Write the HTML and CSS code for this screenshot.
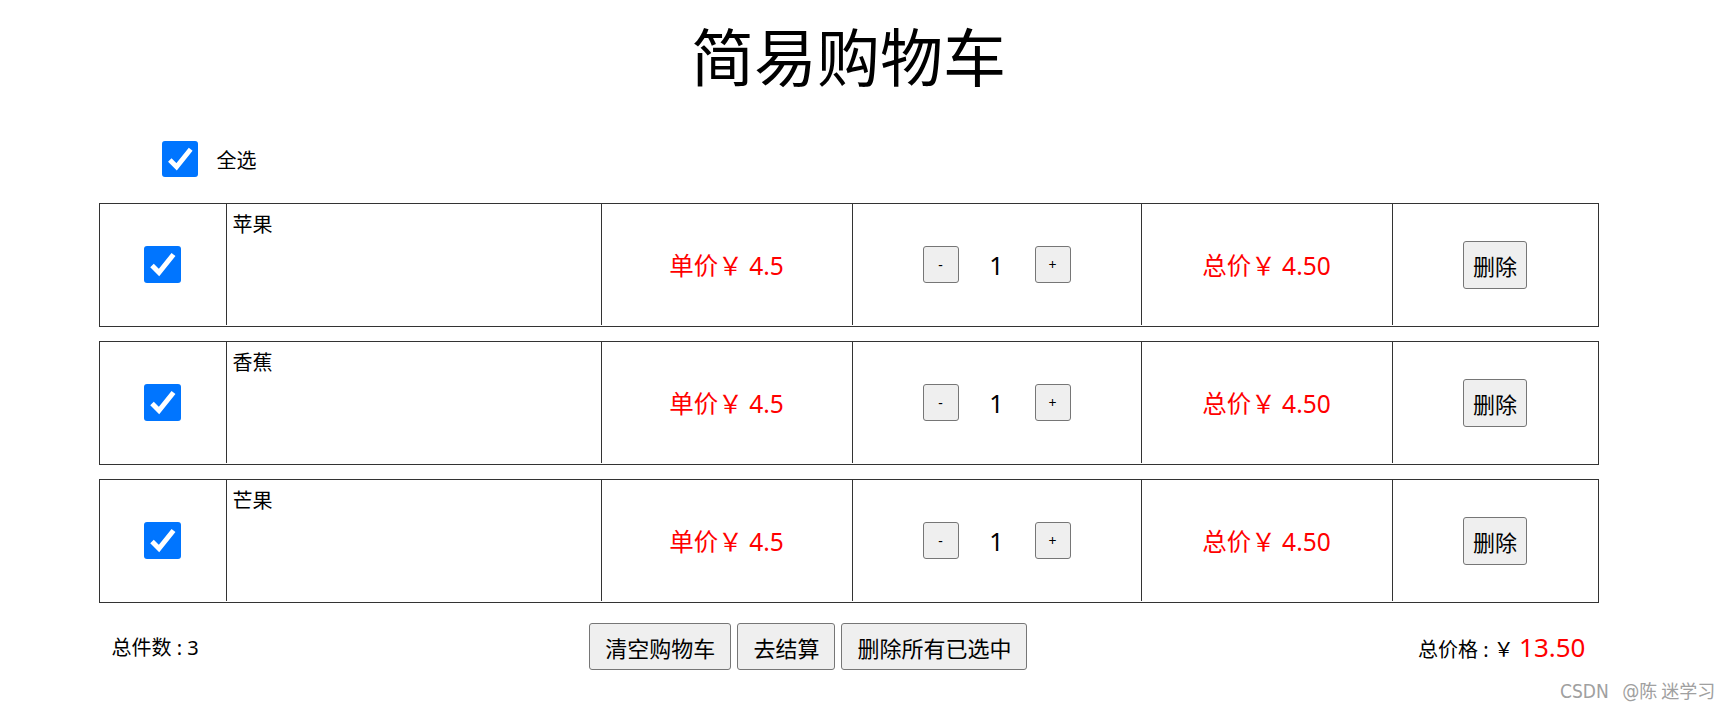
FILE: index.html
```html
<!DOCTYPE html>
<html lang="zh-CN">
<head>
<meta charset="utf-8">
<title>简易购物车</title>
<link rel="stylesheet" href="styles.css">
</head>
<body>
<div class="page">
  <h1 class="title">简易购物车</h1>
  <div class="cart">
    <label class="select-all">
      <span class="cb cb-lg"><svg viewBox="0 0 37 37" width="36" height="36"><rect width="37" height="37" rx="3" fill="#0075ff"/><polyline points="8,19.5 15,26.5 29.5,8.5" fill="none" stroke="#fff" stroke-width="5"/></svg></span>
      <span class="select-text">全选</span>
    </label>

    <div class="items">
      <div class="item">
        <div class="cell c-check"><span class="cb"><svg viewBox="0 0 37 37" width="37" height="37"><rect width="37" height="37" rx="3" fill="#0075ff"/><polyline points="8,19.5 15,26.5 29.5,8.5" fill="none" stroke="#fff" stroke-width="5"/></svg></span></div>
        <div class="cell c-name">苹果</div>
        <div class="cell c-price">单价￥ 4.5</div>
        <div class="cell c-qty"><button class="btn step">-</button><span class="qty">1</span><button class="btn step">+</button></div>
        <div class="cell c-total">总价￥ 4.50</div>
        <div class="cell c-del"><button class="btn del">删除</button></div>
      </div>
      <div class="item">
        <div class="cell c-check"><span class="cb"><svg viewBox="0 0 37 37" width="37" height="37"><rect width="37" height="37" rx="3" fill="#0075ff"/><polyline points="8,19.5 15,26.5 29.5,8.5" fill="none" stroke="#fff" stroke-width="5"/></svg></span></div>
        <div class="cell c-name">香蕉</div>
        <div class="cell c-price">单价￥ 4.5</div>
        <div class="cell c-qty"><button class="btn step">-</button><span class="qty">1</span><button class="btn step">+</button></div>
        <div class="cell c-total">总价￥ 4.50</div>
        <div class="cell c-del"><button class="btn del">删除</button></div>
      </div>
      <div class="item">
        <div class="cell c-check"><span class="cb"><svg viewBox="0 0 37 37" width="37" height="37"><rect width="37" height="37" rx="3" fill="#0075ff"/><polyline points="8,19.5 15,26.5 29.5,8.5" fill="none" stroke="#fff" stroke-width="5"/></svg></span></div>
        <div class="cell c-name">芒果</div>
        <div class="cell c-price">单价￥ 4.5</div>
        <div class="cell c-qty"><button class="btn step">-</button><span class="qty">1</span><button class="btn step">+</button></div>
        <div class="cell c-total">总价￥ 4.50</div>
        <div class="cell c-del"><button class="btn del">删除</button></div>
      </div>
    </div>

    <div class="footer">
      <div class="count">总件数 : 3</div>
      <div class="actions">
        <button class="btn action">清空购物车</button>
        <button class="btn action">去结算</button>
        <button class="btn action">删除所有已选中</button>
      </div>
      <div class="sum">总价格 : ￥ <span class="sum-price">13.50</span></div>
    </div>
  </div>
</div>
<div class="watermark"><span class="wm-latin">CSDN @</span>陈 迷学习</div>
</body>
</html>
```

FILE: styles.css
```css
html, body {
  margin: 0;
  padding: 0;
  background: #fff;
}
body {
  font-family: "Noto Sans", "Noto Sans CJK SC", sans-serif;
  color: #000;
  position: relative;
  height: 708px;
  overflow: hidden;
}
.page {
  width: 1697px;
}
.title {
  margin: 0;
  padding-top: 22px;
  font-family: "Noto Sans CJK SC", sans-serif;
  font-size: 63px;
  line-height: 63px;
  font-weight: 400;
  text-align: center;
}
.cart {
  width: 1500px;
  margin: 0 auto;
}
.select-all {
  display: flex;
  align-items: center;
  gap: 19px;
  height: 36px;
  margin-top: 56px;
  padding-left: 63px;
  font-size: 20px;
}
.cb {
  display: block;
  line-height: 0;
}
.items {
  display: flex;
  flex-direction: column;
  gap: 14px;
  margin-top: 26px;
}
.item {
  display: flex;
  align-items: flex-start;
  height: 122px;
  border: 1px solid #333;
}
.cell {
  box-sizing: border-box;
  height: 121px;
  border-right: 1px solid #333;
  display: flex;
  align-items: center;
  justify-content: center;
}
.c-check { width: 127px; }
.c-name {
  width: 375px;
  align-items: flex-start;
  justify-content: flex-start;
  padding: 6px;
  font-size: 20px;
  line-height: 29px;
}
.c-price { width: 251px; }
.c-qty { width: 289px; }
.c-total { width: 251px; }
.c-del { width: 205px; border-right: none; }
.c-price, .c-total {
  color: #f00;
  font-size: 24.5px;
}
.btn {
  font-family: "Noto Sans", "Noto Sans CJK SC", sans-serif;
  background: #efefef;
  border: 1px solid #767676;
  border-radius: 3px;
  color: #000;
  margin: 0;
  box-sizing: border-box;
}
.step {
  width: 36px;
  height: 37px;
  padding: 0;
  font-size: 14px;
}
.qty {
  width: 76px;
  text-align: center;
  font-size: 25px;
}
.del {
  height: 48px;
  padding: 0 8.5px;
  font-size: 22px;
}
.footer {
  display: flex;
  justify-content: space-between;
  align-items: center;
  margin-top: 20px;
  padding: 0 13px;
  font-size: 20px;
}
.actions {
  display: flex;
  gap: 6px;
}
.action {
  height: 47px;
  padding: 0 15px;
  font-size: 22px;
}
.sum-price {
  color: #f00;
  font-size: 26px;
}
.watermark {
  position: absolute;
  left: 1560px;
  top: 677px;
  font-size: 18px;
  color: #a0a0a0;
  white-space: nowrap;
  font-family: "Noto Sans CJK SC", sans-serif;
}
.wm-latin {
  font-family: "Liberation Sans Narrow", "DejaVu Sans Condensed", "Liberation Sans", sans-serif;
  font-size: 19px;
  word-spacing: 8px;
}
```
